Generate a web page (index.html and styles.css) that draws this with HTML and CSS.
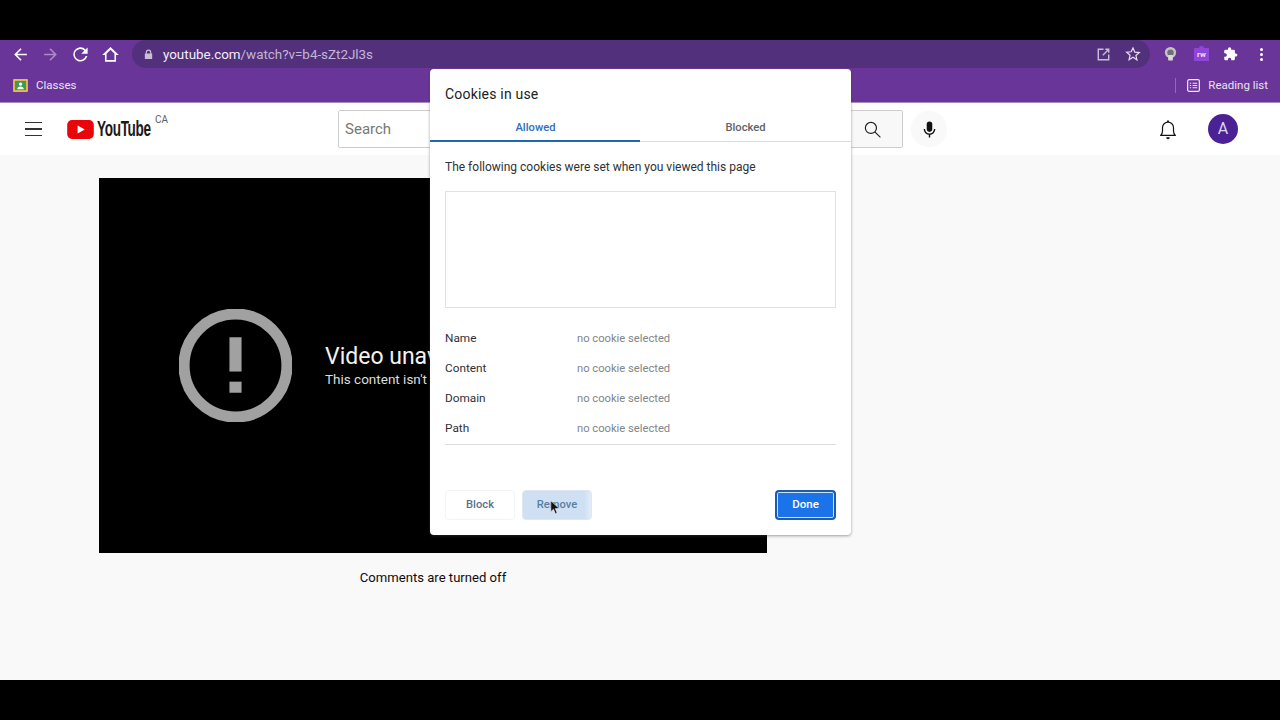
FILE: index.html
```html
<!DOCTYPE html>
<html lang="en">
  <head>
    <meta charset="UTF-8" />
    <title>Cookies in use</title>
    <link rel="stylesheet" href="styles.css">
  </head>
  <body>
    <div class="screen">
      <div class="toolbar">
        <svg class="nav-icon" viewBox="0 0 24 24"><path d="M20 11H7.800l5.600-5.600L12 4l-8 8 8 8 1.400-1.400L7.800 13H20z" fill="#fff"/></svg>
        <svg class="nav-icon" viewBox="0 0 24 24"><path d="M4 11h12.200l-5.600-5.600L12 4l8 8-8 8-1.400-1.400 5.600-5.600H4z" fill="#a98bc6"/></svg>
        <svg class="nav-icon" viewBox="0 0 24 24"><path d="M18.400 5.600A9 9 0 1 0 20.700 14h-2.200a7 7 0 1 1-1.600-6.900L13 11h8V3z" fill="#fff"/></svg>
        <svg class="nav-icon" viewBox="0 0 24 24"><path d="M12 2.500 1.500 12.500H5V21h14v-8.500h3.500zM7 19v-8l5-5 5 5v8z" fill="#fff"/></svg>
        <div class="omnibox">
          <svg class="lock" viewBox="0 0 12 12"><path d="M3 5V3.600a3 3 0 0 1 6 0V5h1v6H2V5zm1.200 0h3.600V3.600a1.800 1.800 0 0 0-3.600 0z" fill="#cbbfd8"/></svg>
          <span class="url"><span class="url-host">youtube.com</span>/watch?v=b4-sZt2Jl3s</span>
          <span class="spacer"></span>
          <svg class="omni-icon open-tab" viewBox="0 0 16 16"><path d="M3 3h5v1.200H4.200v7.600h7.600V8H13v5H3zM9.500 3H13v3.500h-1.200V5L7.800 9 7 8.200l4-4H9.500z" fill="#c9bdd6"/></svg>
          <svg class="omni-icon star" viewBox="0 0 24 24"><path d="M12 3l2.700 6.200 6.800.6-5.100 4.500 1.500 6.700L12 17l-5.900 3.500 1.500-6.700-5.100-4.500 6.800-.6z" fill="none" stroke="#e6deee" stroke-width="1.800"/></svg>
        </div>
        <div class="extensions">
          <svg class="ext-icon" viewBox="0 0 16 16"><circle cx="8" cy="6.500" r="6" fill="#c4c4c4"/><circle cx="8" cy="6.500" r="3.400" fill="#6f6f74"/><rect x="5.500" y="9" width="5" height="6" rx="1" fill="#d9d9d9"/></svg>
          <span class="rw-badge">rw</span>
          <svg class="ext-icon puzzle" viewBox="0 0 24 24"><path d="M20.500 11H19V7a2 2 0 0 0-2-2h-4V3.500a2.500 2.500 0 0 0-5 0V5H4a2 2 0 0 0-2 2v3.800h1.500a2.700 2.700 0 0 1 0 5.400H2V20a2 2 0 0 0 2 2h3.800v-1.500a2.700 2.700 0 0 1 5.400 0V22H17a2 2 0 0 0 2-2v-4h1.500a2.500 2.500 0 0 0 0-5z" fill="#fff"/></svg>
          <span class="dots"><i></i><i></i><i></i></span>
        </div>
      </div>
      <div class="bookmarks">
        <svg class="classes-icon" viewBox="0 0 16 14"><rect width="16" height="14" rx="1" fill="#e9bd45"/><rect x="2" y="2" width="12" height="10" fill="#3f9a58"/><circle cx="8" cy="5.500" r="1.800" fill="#fff"/><path d="M4.500 11c0-2 1.500-3 3.500-3s3.500 1 3.500 3z" fill="#fff"/></svg>
        <span class="bookmark-label">Classes</span>
        <span class="spacer"></span>
        <span class="bookmark-sep"></span>
        <svg class="reading-icon" viewBox="0 0 14 14"><rect x=".7" y=".7" width="12.600" height="12.600" rx="1.500" fill="none" stroke="#eee8f4" stroke-width="1.300"/><path d="M3 4h1.500v1.200H3zm3 0h5v1.200H6zM3 6.400h1.500v1.200H3zm3 0h5v1.200H6zM3 8.800h1.500V10H3zm3 0h5V10H6z" fill="#eee8f4"/></svg>
        <span class="bookmark-label">Reading list</span>
      </div>
      <div class="page">
        <header class="yt-header">
          <div class="burger"><i></i><i></i><i></i></div>
          <svg class="yt-play" viewBox="0 0 28 20"><rect width="28" height="20" rx="5" fill="#e8060b"/><path d="M11 5.700v8.600l7.500-4.300z" fill="#fff"/></svg>
          <span class="yt-word">YouTube</span>
          <span class="yt-country">CA</span>
          <div class="search">
            <span class="search-box">Search</span>
            <span class="search-btn">
              <svg class="search-icon" viewBox="0 0 24 24"><circle cx="10" cy="10" r="7" fill="none" stroke="#222" stroke-width="1.500"/><path d="M15 15l7 7" stroke="#222" stroke-width="1.500"/></svg>
            </span>
          </div>
          <span class="mic">
            <svg class="mic-icon" viewBox="0 0 24 24"><rect x="8.500" y="2" width="7" height="13" rx="3.500" fill="#111"/><path d="M5.500 11.500a6.500 6.500 0 0 0 13 0M12 18v4" fill="none" stroke="#111" stroke-width="1.800"/></svg>
          </span>
          <span class="spacer"></span>
          <svg class="bell" viewBox="0 0 24 24"><path d="M4 18.500c1.500-1.500 2-2.500 2-5V10a6 6 0 0 1 12 0v3.500c0 2.500.5 3.500 2 5z" fill="none" stroke="#111" stroke-width="1.300" stroke-linejoin="round"/><path d="M10 20.500h4a2 2 0 0 1-4 0zM11 3a1 1 0 0 1 2 0v1h-2z" fill="#111"/></svg>
          <span class="avatar">A</span>
        </header>
        <main class="watch">
          <div class="player">
            <svg class="warn" viewBox="0 0 112 112"><circle cx="56" cy="56" r="51" fill="none" stroke="#a1a1a1" stroke-width="11"/><rect x="50" y="28" width="12" height="34" fill="#a1a1a1"/><rect x="50" y="72" width="12" height="11" fill="#a1a1a1"/></svg>
            <div class="player-text">
              <div class="player-title">Video unav</div>
              <div class="player-sub">This content isn't</div>
            </div>
          </div>
          <div class="comments">Comments are turned off</div>
        </main>
      </div>

      <div class="dialog">
        <h1 class="dialog-title">Cookies in use</h1>
        <div class="tabs">
          <div class="tab active">Allowed</div>
          <div class="tab">Blocked</div>
        </div>
        <div class="dialog-body">
          <p class="cookie-note">The following cookies were set when you viewed this page</p>
          <div class="cookie-tree"></div>
          <dl class="details">
            <dt>Name</dt><dd>no cookie selected</dd>
            <dt>Content</dt><dd>no cookie selected</dd>
            <dt>Domain</dt><dd>no cookie selected</dd>
            <dt>Path</dt><dd>no cookie selected</dd>
          </dl>
          <div class="actions">
            <span class="btn">Block</span>
            <span class="btn btn-hover">Remove
              <svg class="cursor" viewBox="0 0 12 18"><path d="M1 1v13l3.200-3 2.300 5.500 2-.9L6.300 10.300H11z" fill="#111" stroke="#fff" stroke-width=".6"/></svg>
            </span>
            <span class="spacer"></span>
            <span class="btn btn-done">Done</span>
          </div>
        </div>
      </div>
    </div>
  </body>
</html>
```

FILE: styles.css
```css
* {
  margin: 0;
  padding: 0;
  box-sizing: border-box;
}
body {
  background: #000;
  font-family: Roboto, "Liberation Sans", sans-serif;
  overflow: hidden;
}
.screen {
  position: relative;
  width: 1280px;
  height: 720px;
  padding: 40px 0;
  display: flex;
  flex-direction: column;
}
.spacer {
  flex: 1;
}

/* browser chrome */
.toolbar {
  height: 28px;
  background: #6a3599;
  display: flex;
  align-items: center;
  padding-left: 11px;
}
.nav-icon {
  width: 19px;
  height: 19px;
  margin-right: 11px;
}
.omnibox {
  width: 1018px;
  height: 28px;
  margin-left: 1px;
  padding: 0 9px 0 11px;
  background: #52307c;
  border-radius: 14px;
  display: flex;
  align-items: center;
}
.lock {
  width: 11px;
  height: 11px;
}
.url {
  margin-left: 9px;
  font-size: 13.4px;
  color: #c3b6d2;
}
.url-host {
  color: #f2edf7;
}
.omni-icon {
  width: 16px;
  height: 16px;
}
.open-tab {
  width: 19px;
  height: 19px;
}
.star {
  margin-left: 12px;
}
.extensions {
  flex: 1;
  display: flex;
  align-items: center;
  padding-left: 13px;
}
.ext-icon {
  width: 15px;
  height: 16px;
  margin-right: 16px;
}
.puzzle {
  margin-right: 22px;
}
.rw-badge {
  position: relative;
  width: 15px;
  height: 13px;
  margin-right: 14px;
  background: #8f45d6;
  color: #efd9fb;
  font-size: 8px;
  line-height: 13px;
  text-align: center;
  font-weight: 700;
}
.rw-badge::before {
  content: "";
  position: absolute;
  left: 5px;
  top: -2px;
  width: 5px;
  height: 3px;
  background: #8f45d6;
  border-radius: 2px 2px 0 0;
}
.dots {
  display: flex;
  flex-direction: column;
  gap: 2px;
}
.dots i {
  width: 3px;
  height: 3px;
  background: #fff;
  border-radius: 50%;
}
.bookmarks {
  height: 35px;
  background: #6a3599;
  border-bottom: 1px solid #a58fc0;
  display: flex;
  align-items: center;
  padding: 0 12px 0 13px;
}
.classes-icon {
  width: 15px;
  height: 13px;
  margin-right: 8px;
}
.bookmark-label {
  font-size: 11.5px;
  color: #e9e1f1;
}
.bookmark-sep {
  width: 1px;
  height: 15px;
  background: #8f6bb5;
  margin-right: 11px;
}
.reading-icon {
  width: 13px;
  height: 13px;
  margin-right: 8px;
}

/* youtube page */
.page {
  flex: 1;
  background: #f9f9f9;
  display: flex;
  flex-direction: column;
}
.yt-header {
  height: 52px;
  background: #fff;
  display: flex;
  align-items: center;
  padding: 0 42px 0 25px;
}
.burger {
  width: 17px;
  display: flex;
  flex-direction: column;
  gap: 5px;
  margin-right: 25px;
}
.burger i {
  height: 1.5px;
  background: #333;
}
.yt-play {
  width: 27px;
  height: 19px;
}
.yt-word {
  width: 55px;
  margin-left: 3px;
  font-family: "Liberation Sans", sans-serif;
  font-size: 21.5px;
  font-weight: 700;
  letter-spacing: -.5px;
  white-space: nowrap;
  color: #1a1a1a;
  transform: scaleX(.63);
  transform-origin: left;
}
.yt-country {
  align-self: flex-start;
  margin-top: 11px;
  font-size: 10px;
  color: #606060;
  margin-left: 3px;
}
.search {
  display: flex;
  margin-left: 170px;
  width: 565px;
  height: 38px;
  border: 1px solid #ccc;
  border-radius: 2px;
}
.search-box {
  flex: 1;
  padding: 0 6px;
  background: #fff;
  color: #777;
  font-size: 15px;
  line-height: 36px;
}
.search-btn {
  width: 64px;
  padding-left: 4px;
  background: #f8f8f8;
  border-left: 1px solid #ddd;
  display: flex;
  align-items: center;
  justify-content: center;
}
.search-icon {
  width: 19px;
  height: 19px;
}
.mic {
  width: 36px;
  height: 36px;
  margin-left: 8px;
  background: #f9f9f9;
  border-radius: 50%;
  display: flex;
  align-items: center;
  justify-content: center;
}
.mic-icon {
  width: 19px;
  height: 19px;
}
.bell {
  width: 22px;
  height: 23px;
  margin-right: 29px;
}
.avatar {
  width: 30px;
  height: 30px;
  background: #4a2296;
  color: #ddd6ec;
  border-radius: 50%;
  font-size: 16px;
  line-height: 30px;
  text-align: center;
}
.watch {
  padding: 23px 0 0 99px;
}
.player {
  width: 668px;
  height: 375px;
  background: #000;
  display: flex;
  align-items: center;
  padding-left: 80px;
}
.warn {
  width: 113px;
  height: 113px;
}
.player-text {
  margin-left: 33px;
  white-space: nowrap;
}
.player-title {
  color: #f2f2f2;
  font-size: 23px;
  line-height: 27px;
}
.player-sub {
  color: #ddd;
  font-size: 13.5px;
  line-height: 18px;
}
.comments {
  width: 668px;
  margin-top: 17px;
  text-align: center;
  font-size: 13.1px;
  line-height: 16px;
  color: #0d0d0d;
}

/* cookies dialog, sits over the page */
.dialog {
  position: absolute;
  left: 430px;
  top: 69px;
  width: 421px;
  height: 466px;
  background: #fff;
  border-radius: 4px;
  box-shadow: 0 1px 3px rgba(60, 64, 67, .5);
}
.dialog-title {
  padding: 16px 15px 0;
  height: 46px;
  font-size: 14px;
  line-height: 18px;
  font-weight: 400;
  letter-spacing: .2px;
  color: #202124;
}
.tabs {
  display: flex;
  height: 27px;
  border-bottom: 1px solid #dadce0;
}
.tab {
  flex: 1;
  text-align: center;
  font-size: 11.2px;
  font-weight: 500;
  line-height: 25px;
  color: #5f6368;
}
.tab.active {
  flex: 0 0 210px;
  padding-left: 1px;
  color: #2f6fc0;
  height: 27px;
  border-bottom: 2px solid #1f66b5;
}
.dialog-body {
  padding: 0 15px;
}
.cookie-note {
  margin-top: 17px;
  font-size: 12px;
  line-height: 16px;
  color: #303134;
}
.cookie-tree {
  margin-top: 16px;
  height: 117px;
  border: 1px solid #e0e1e4;
}
.details {
  margin-top: 15px;
  padding-bottom: 1px;
  height: 122px;
  display: grid;
  grid-template-columns: 132px 1fr;
  grid-auto-rows: 30px;
  align-items: center;
  font-size: 11.2px;
  border-bottom: 1px solid #dadce0;
}
.details dt {
  font-size: 11.8px;
  color: #303134;
}
.details dd {
  color: #80868b;
}
.actions {
  margin-top: 45px;
  display: flex;
  gap: 7px;
}
.btn {
  position: relative;
  width: 70px;
  height: 30px;
  border: 1px solid #f1f3f4;
  border-radius: 4px;
  font-size: 11.2px;
  font-weight: 500;
  line-height: 28px;
  text-align: center;
  color: #5b7287;
}
.btn-hover {
  background: linear-gradient(90deg, #cfe0f3 90%, #e2ecf7);
  border-color: #dbe7f5;
  color: #5b7f9f;
}
.cursor {
  position: absolute;
  left: 27px;
  top: 9px;
  width: 10px;
  height: 15px;
}
.btn-done {
  width: 61px;
  background: #1a73e8;
  border: 2px solid #1a5cad;
  box-shadow: inset 0 0 0 1px #cfe0f8;
  color: #fff;
  font-size: 11.5px;
  line-height: 25px;
}
```
